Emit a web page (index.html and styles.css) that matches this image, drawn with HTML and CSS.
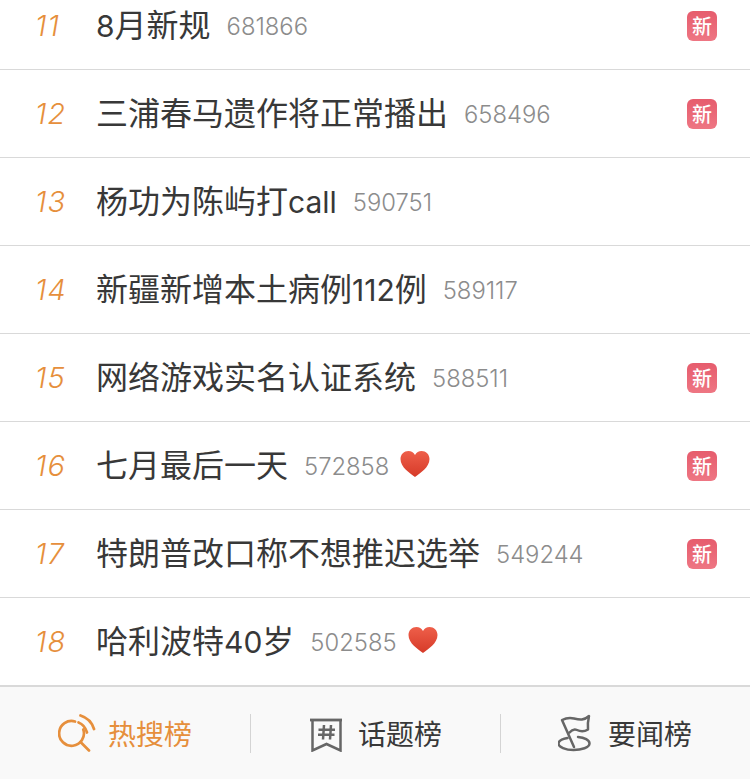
FILE: index.html
```html
<!DOCTYPE html>
<html lang="zh">
<head>
<meta charset="utf-8">
<title>热搜榜</title>
<link rel="stylesheet" href="styles.css">
</head>
<body>
<svg class="defs" width="0" height="0" aria-hidden="true">
  <defs>
    <linearGradient id="hg" x1="0" y1="0" x2="0" y2="1">
      <stop offset="0" stop-color="#ee5f4a"/>
      <stop offset="1" stop-color="#d63a28"/>
    </linearGradient>
    <symbol id="heart" viewBox="0 0 30 28">
      <path d="M15 27C10 23 .5 17.500 .5 9C.5 4.200 4.200 1 8.400 1c2.900 0 5.200 1.500 6.600 4 1.400-2.500 3.700-4 6.600-4C25.800 1 29.500 4.200 29.500 9 29.500 17.500 20 23 15 27Z" fill="url(#hg)"/>
    </symbol>
  </defs>
</svg>
<div class="page">
  <ul class="list">
    <li class="row"><span class="rank">11</span><span class="title"><span class="latin">8</span>月新规</span><span class="count">681866</span><span class="badge">新</span></li>
    <li class="row"><span class="rank">12</span><span class="title">三浦春马遗作将正常播出</span><span class="count">658496</span><span class="badge">新</span></li>
    <li class="row"><span class="rank">13</span><span class="title">杨功为陈屿打<span class="latin">call</span></span><span class="count">590751</span></li>
    <li class="row"><span class="rank">14</span><span class="title">新疆新增本土病例<span class="latin">112</span>例</span><span class="count">589117</span></li>
    <li class="row"><span class="rank">15</span><span class="title">网络游戏实名认证系统</span><span class="count">588511</span><span class="badge">新</span></li>
    <li class="row"><span class="rank">16</span><span class="title">七月最后一天</span><span class="count">572858</span><svg class="heart"><use href="#heart"/></svg><span class="badge">新</span></li>
    <li class="row"><span class="rank">17</span><span class="title">特朗普改口称不想推迟选举</span><span class="count">549244</span><span class="badge">新</span></li>
    <li class="row"><span class="rank">18</span><span class="title">哈利波特<span class="latin">40</span>岁</span><span class="count">502585</span><svg class="heart"><use href="#heart"/></svg></li>
  </ul>
  <nav class="tabs">
    <a class="tab tab-active">
      <svg class="tab-icon" viewBox="8 6 38 38" fill="none" stroke="#e68f3c" stroke-width="2.700" stroke-linecap="round">
        <path d="M25 13.500A12.400 12.400 0 1 0 33.300 21.500"/>
        <path d="M30.500 34l8.500 8.500"/>
        <path d="M30.500 7.500C37 9.500 42 14.500 44 21"/>
        <path d="M28.500 14.500C32 15.800 35.500 19.500 37 24.500"/>
      </svg>
      <span>热搜榜</span>
    </a>
    <a class="tab">
      <svg class="tab-icon" viewBox="8 6 38 38" fill="none" stroke="#666" stroke-width="2.500">
        <path d="M10 12h32" stroke-width="2.800"/>
        <path d="M12.500 12v30.500L26.500 36l14 6.500V12"/>
        <path d="M24 17l-1 14.500M31 17l-1 14.500M18.500 21.800h16.500M18 26.800h16.500" stroke-width="2.500"/>
      </svg>
      <span>话题榜</span>
    </a>
    <a class="tab">
      <svg class="tab-icon" viewBox="8 6 38 38" fill="none" stroke="#666" stroke-width="2.500" stroke-linejoin="round" stroke-linecap="round">
        <path d="M24 39L12 12c4-2 8-2.500 12-1.500 6 1.500 10 2 15-2.500-1 4.500-1.500 9-1 13.500-4 2.500-7 2.500-11 .5-3-1.500-5-.5-7.500 2.500"/>
        <path d="M17.500 30C12 31 8.500 33 8.500 35.500c0 3.500 7 6.500 15 6.500s16-2.500 16-6.500c0-3.300-5-6-11.500-6.500"/>
      </svg>
      <span>要闻榜</span>
    </a>
  </nav>
</div>
</body>
</html>
```

FILE: styles.css
```css
* { box-sizing: border-box; }
html, body { margin: 0; padding: 0; }
body {
  width: 750px;
  height: 779px;
  overflow: hidden;
  background: #fff;
  font-family: "Noto Sans CJK SC", "Noto Sans", sans-serif;
}
.defs { display: block; height: 0; }
.page {
  height: 779px;
  display: flex;
  flex-direction: column;
  overflow: hidden;
}
.list {
  list-style: none;
  margin: -18px 0 0;
  padding: 0;
  flex: none;
}
.row {
  height: 88px;
  display: flex;
  align-items: center;
  padding: 0 33px 0 0;
  border-bottom: 1px solid #d9d9d9;
}
.rank {
  width: 96px;
  padding-left: 35px;
  flex: none;
  font-family: "Inter", sans-serif;
  font-style: italic;
  font-weight: 300;
  font-size: 29px;
  letter-spacing: 1px;
  color: #e68f3c;
}
.title {
  font-family: "Inter", "Noto Sans CJK SC", sans-serif;
  font-size: 32px;
  font-weight: 400;
  color: #383838;
  line-height: 44px;
}
.latin { font-size: 30px; }
.count {
  margin: 2px 0 0 16px;
  font-family: "Inter", sans-serif;
  font-weight: 300;
  font-size: 23.800px;
  color: #8c8c8c;
}
.heart {
  width: 30px;
  height: 28px;
  margin: -3px 0 0 11px;
}
.badge {
  margin-left: auto;
  width: 30px;
  height: 30px;
  border-radius: 6px;
  background: linear-gradient(180deg, #e65c6d, #ee7683);
  color: #fff;
  font-size: 20px;
  font-weight: 500;
  line-height: 30px;
  text-align: center;
}
.tabs {
  flex: 1;
  display: flex;
  align-items: center;
  background: #f9f9f9;
  border-top: 1px solid #d9d9d9;
}
.tab {
  width: 250px;
  height: 39px;
  display: flex;
  align-items: center;
  gap: 12px;
  padding-left: 58px;
  font-size: 28px;
  font-weight: 400;
  color: #383838;
}
.tab + .tab {
  padding-left: 57px;
  border-left: 1px solid #d4d4d4;
}
.tab-active { color: #e68f3c; }
.tab-icon { width: 38px; height: 38px; flex: none; }
```
